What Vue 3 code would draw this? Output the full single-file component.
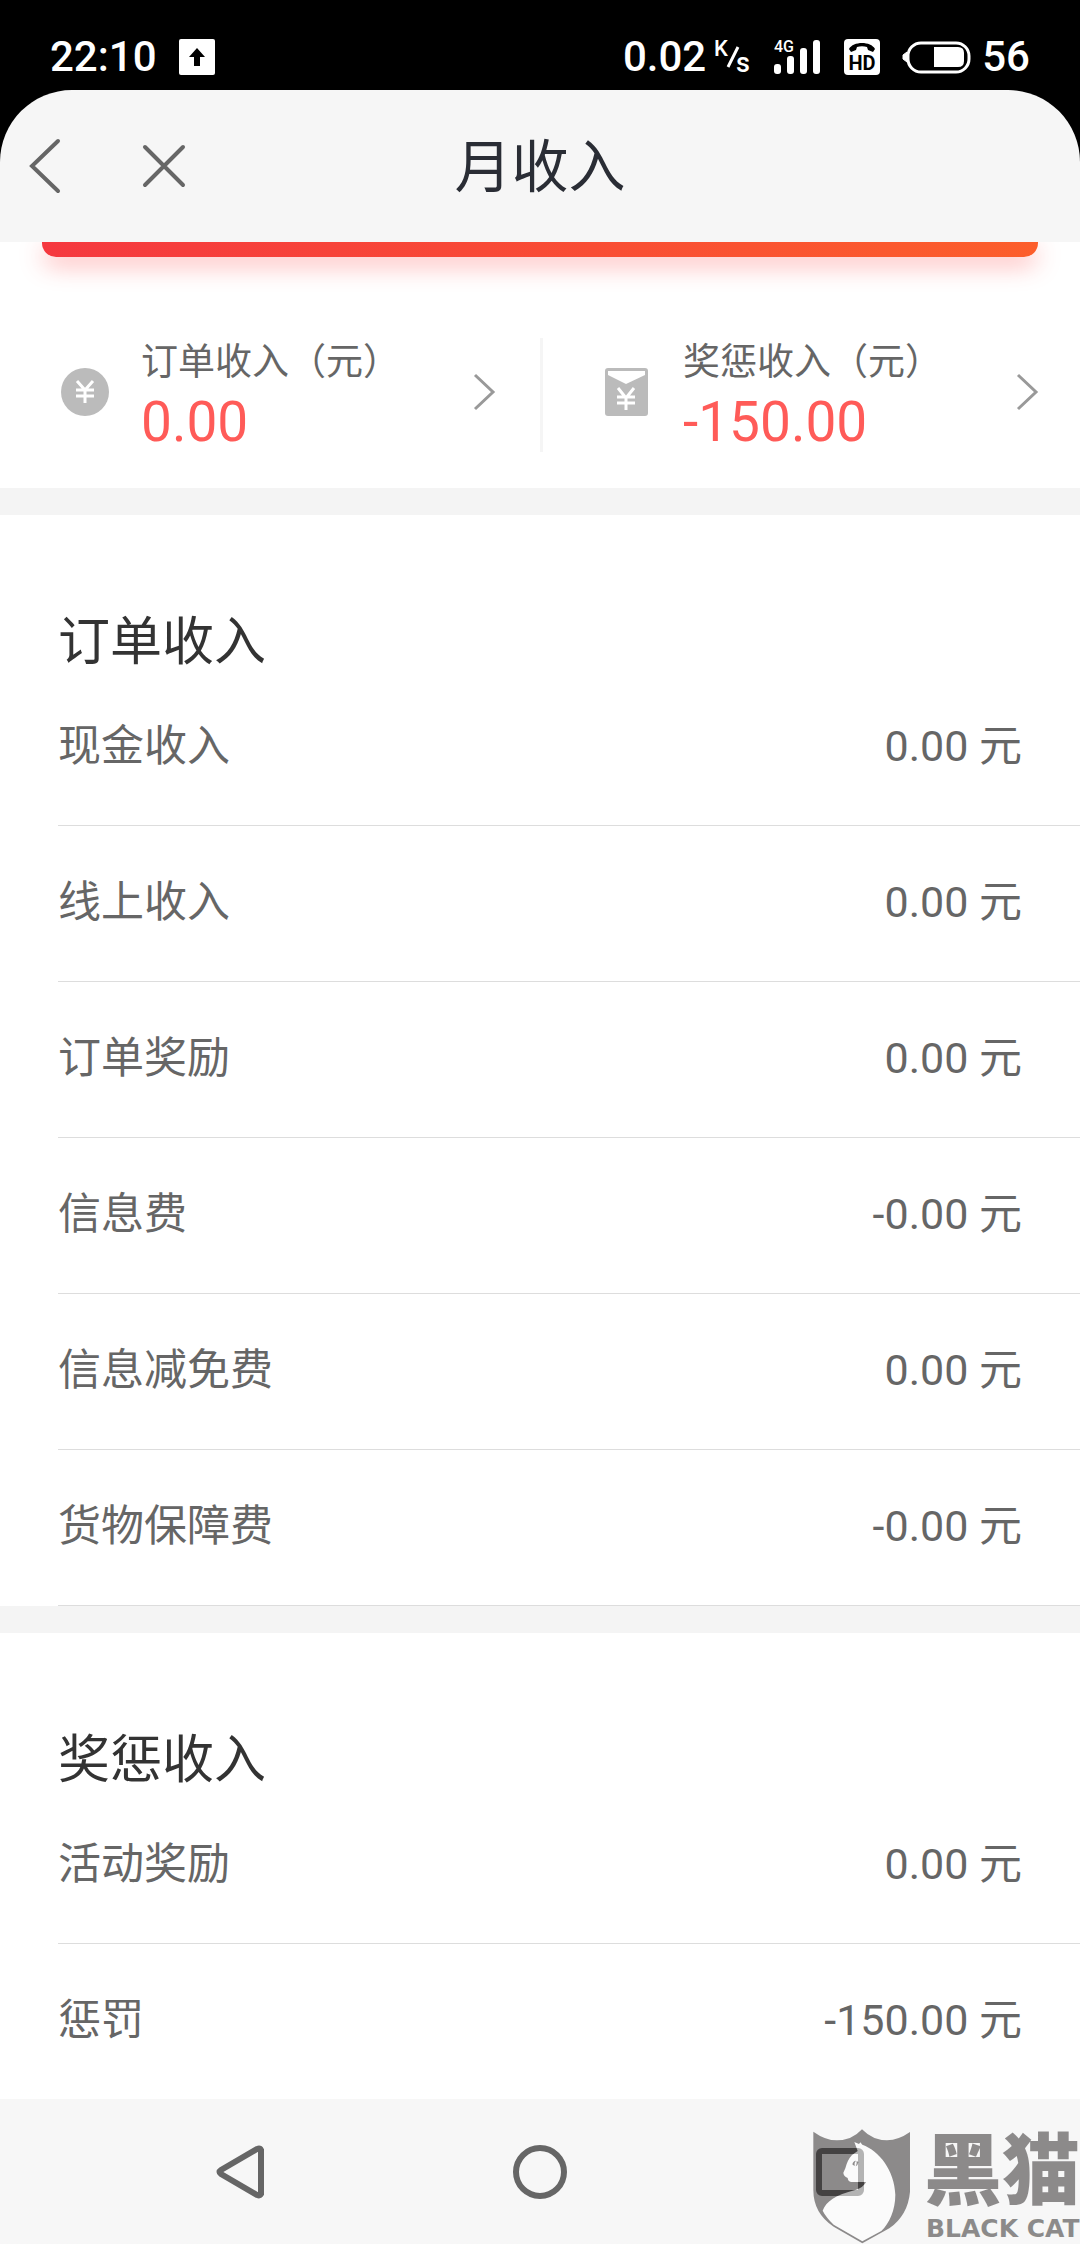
<template>
  <div class="page">
    <!-- Phone status bar -->
    <div class="status-bar">
      <div class="status-left">
        <span>22:10</span>
        <svg width="36" height="36" viewBox="0 0 36 36">
          <rect width="36" height="36" rx="2" fill="#fff" />
          <path d="M18 9 L26 18 H21 V27 H15 V18 H10 Z" fill="#000" />
        </svg>
      </div>
      <div class="status-right">
        <span>0.02</span>
        <svg class="speed-unit" width="36" height="36" viewBox="0 0 36 36">
          <text x="0" y="17" font-size="22">K</text>
          <path d="M14 28 L24 8" stroke="#fff" stroke-width="3" />
          <text x="22" y="33" font-size="27">s</text>
        </svg>
        <svg class="signal" width="46" height="36" viewBox="0 0 46 36">
          <text x="0" y="13" font-size="16">4G</text>
          <rect x="0" y="25" width="7" height="10" rx="3" />
          <rect x="13" y="17" width="7" height="18" rx="3" />
          <rect x="26" y="9" width="7" height="26" rx="3" />
          <rect x="39" y="1" width="7" height="34" rx="3" />
        </svg>
        <svg class="hd" width="36" height="36" viewBox="0 0 36 36">
          <rect width="36" height="36" rx="4" fill="#fff" />
          <path d="M5 10 C9 2 27 2 31 10 L29 13 L24 11 L23 8 C20 7 16 7 13 8 L12 11 L7 13 Z" />
          <text x="18" y="31" font-size="20" text-anchor="middle">HD</text>
        </svg>
        <svg class="battery" width="68" height="32" viewBox="0 0 68 32">
          <path d="M5 11 L1 14 V18 L5 21 Z" fill="#fff" stroke="#fff" />
          <rect x="6" y="2" width="61" height="29" rx="13" fill="none" stroke="#fff" stroke-width="3" />
          <path d="M32 6 H56 Q62 6 62 12 V20 Q62 26 56 26 H32 Z" fill="#fff" />
        </svg>
        <span>56</span>
      </div>
    </div>

    <!-- Title bar -->
    <div class="header-wrap">
      <header class="header">
        <div class="header-actions">
          <button class="icon-btn" aria-label="返回">
            <svg width="32" height="56" viewBox="0 0 32 56">
              <path d="M29 3 L3 28 L29 53" />
            </svg>
          </button>
          <button class="icon-btn" aria-label="关闭">
            <svg width="42" height="42" viewBox="0 0 42 42">
              <path d="M2 2 L40 40 M40 2 L2 40" />
            </svg>
          </button>
        </div>
        <h1>月收入</h1>
      </header>
    </div>

    <main>
      <section class="overview">
        <div class="card-edge"></div>
        <div class="summary">
          <a v-for="item in summary" :key="item.label" href="#" class="summary-item">
            <svg v-if="item.icon === 'coin'" class="summary-icon" viewBox="0 0 48 48">
              <circle cx="24" cy="24" r="24" fill="#bbb" />
              <path d="M16 13 L24 22 L32 13 M24 22 V35 M15 22 H33 M15 28 H33" />
            </svg>
            <svg v-else class="summary-icon" viewBox="0 0 48 48">
              <rect x="2" y="0" width="43" height="48" rx="3" fill="#bbb" />
              <path class="flap" d="M5 3 H42 V7 L23 16 L5 7 Z" />
              <path d="M15 20 L23 30 L31 20 M23 29 V42 M14 29 H32 M14 35 H32" />
            </svg>
            <div class="summary-text">
              <div class="summary-label">{{ item.label }}</div>
              <div class="summary-value">{{ item.value }}</div>
            </div>
            <svg class="arrow" width="22" height="38" viewBox="0 0 22 38">
              <path d="M2 2 L20 19 L2 36" />
            </svg>
          </a>
        </div>
      </section>

      <!-- Detail lists -->
      <section v-for="group in groups" :key="group.title" class="group">
        <h2>{{ group.title }}</h2>
        <dl>
          <div v-for="row in group.rows" :key="row.name" class="row">
            <dt>{{ row.name }}</dt>
            <dd>{{ row.amount }} 元</dd>
          </div>
        </dl>
      </section>
    </main>

    <!-- System navigation -->
    <nav class="nav-bar">
      <button class="icon-btn" aria-label="后退">
        <svg width="54" height="54" viewBox="0 0 54 54">
          <path d="M48 5 V49 Q47 51 44 50 L8 29 Q5 27 8 25 L44 4 Q47 3 48 5 Z" />
        </svg>
      </button>
      <button class="icon-btn" aria-label="主页">
        <svg width="54" height="54" viewBox="0 0 54 54">
          <circle cx="27" cy="27" r="24" />
        </svg>
      </button>
      <button class="icon-btn" aria-label="最近任务">
        <svg width="54" height="54" viewBox="0 0 54 54">
          <rect x="6" y="6" width="42" height="42" rx="3" />
        </svg>
      </button>

      <div class="watermark">
        <svg width="97" height="115" viewBox="33 87 291 345">
          <path
            fill="#231f20"
            fill-rule="evenodd"
            d="M34 95 Q70 121 105 121 Q150 121 180 88 Q212 121 255 121 Q290 120 324 96 V275 Q318 345 262 385 L181 430 L95 380 Q34 340 34 270 Z"
          />
          <path
            fill="#fff"
            d="M157 126 L171 132 L175 127 L181 134 C232 152 278 212 280 284 C280 330 262 370 238 393 L181 424 L95 374 Q72 352 62 332 C72 305 100 285 160 270 Q185 262 192 246 L147 246 Q138 244 137 234 Q124 228 124 218 L130 205 Q136 180 150 165 L167 153 Z"
          />
          <path fill="#231f20" d="M151 193 Q154 182 162 182 Q155 190 159 197 Q153 197 151 193 Z M164 183 L169 186 Q168 195 161 199 Q165 191 164 183 Z" />
        </svg>
        <div class="watermark-text">
          <span class="watermark-cn">黑猫</span>
          <span class="watermark-en">BLACK CAT</span>
        </div>
      </div>
    </nav>
  </div>
</template>

<script setup>
import { ref } from 'vue'

const summary = ref([
  { label: '订单收入（元）', value: '0.00', icon: 'coin' },
  { label: '奖惩收入（元）', value: '-150.00', icon: 'envelope' },
])

const groups = ref([
  {
    title: '订单收入',
    rows: [
      { name: '现金收入', amount: '0.00' },
      { name: '线上收入', amount: '0.00' },
      { name: '订单奖励', amount: '0.00' },
      { name: '信息费', amount: '-0.00' },
      { name: '信息减免费', amount: '0.00' },
      { name: '货物保障费', amount: '-0.00' },
    ],
  },
  {
    title: '奖惩收入',
    rows: [
      { name: '活动奖励', amount: '0.00' },
      { name: '惩罚', amount: '-150.00' },
    ],
  },
])
</script>

<style>
body {
  margin: 0;
  background: #fff;
}
</style>

<style scoped>
.page {
  min-height: 100vh;
  display: flex;
  flex-direction: column;
  font-family: Roboto, 'Noto Sans CJK SC', sans-serif;
  color: #666;
}

svg {
  display: block;
  flex: none;
  overflow: visible;
}

/* Status bar */
.status-bar {
  display: flex;
  justify-content: space-between;
  height: 90px;
  padding: 24px 50px 0 50px;
  box-sizing: border-box;
  background: #000;
  color: #fff;
  font-size: 42px;
  line-height: 66px;
  font-weight: 500;
}

.status-left,
.status-right {
  display: flex;
  align-items: center;
}

.status-left {
  gap: 22px;
}

.status-right text {
  font-weight: 500;
}

.speed-unit {
  margin-left: 8px;
  fill: #fff;
}

.signal {
  margin-left: 24px;
  fill: #fff;
}

.hd {
  margin-left: 24px;
}

.status-right .hd text {
  font-weight: 700;
}

.battery {
  margin: 0 12px 0 22px;
}

/* Title bar */
.header-wrap {
  background: #000;
}

.header {
  display: grid;
  grid-template-columns: 1fr auto 1fr;
  align-items: center;
  height: 152px;
  padding: 0 29px;
  border-radius: 72px 72px 0 0;
  box-sizing: border-box;
  background: #f6f6f6;
}

.header-actions {
  display: flex;
  align-items: center;
  gap: 82px;
}

.icon-btn {
  padding: 0;
  border: none;
  background: none;
  cursor: pointer;
}

.icon-btn svg {
  fill: none;
  stroke: #666;
  stroke-width: 4;
  stroke-linecap: round;
}

h1 {
  margin: 0;
  padding-top: 4px;
  font-size: 57px;
  line-height: 80px;
  font-weight: 400;
  color: #2a2d35;
}

/* Income overview */
main {
  flex: 1;
}

.overview {
  overflow: hidden;
  padding-bottom: 36px;
}

.card-edge {
  height: 15px;
  margin: 0 42px;
  border-radius: 0 0 14px 14px;
  background: linear-gradient(90deg, #f5383f, #fc5e2b);
  box-shadow: 0 8px 24px rgba(255, 60, 60, 0.4);
}

.summary {
  display: grid;
  grid-template-columns: 1fr 1fr;
  margin-top: 81px;
}

.summary-item {
  display: flex;
  align-items: center;
  height: 114px;
  padding: 0 45px 6px 61px;
  box-sizing: border-box;
  color: inherit;
  text-decoration: none;
}

.summary-item + .summary-item {
  padding-left: 60px;
  padding-right: 42px;
  border-left: 3px solid #f5f5f5;
}

.summary-icon {
  width: 48px;
  height: 48px;
  margin-right: 32px;
  fill: none;
  stroke: #fff;
  stroke-width: 3;
}

.summary-icon circle,
.summary-icon rect {
  stroke: none;
}

.summary-icon .flap {
  fill: #fff;
  stroke: none;
}

.summary-text {
  flex: 1;
}

.summary-label {
  font-size: 37px;
  line-height: 60px;
}

.summary-value {
  font-size: 55px;
  line-height: 58px;
  color: #ff5b58;
}

.arrow {
  fill: none;
  stroke: #999;
  stroke-width: 3;
}

/* Detail lists */
.group {
  border-top: 27px solid #f4f4f4;
  padding-left: 58px;
}

h2 {
  margin: 0;
  padding: 90px 0 0;
  height: 155px;
  box-sizing: border-box;
  font-size: 52px;
  line-height: 76px;
  font-weight: 400;
  color: #333;
}

dl {
  margin: 0;
}

.row {
  display: flex;
  justify-content: space-between;
  padding: 44px 58px 47px 0;
  border-bottom: 1px solid #ddd;
  font-size: 43px;
  line-height: 64px;
}

.group:last-child .row:last-child {
  border-bottom: none;
}

dd {
  margin: 0;
}

/* System navigation */
.nav-bar {
  position: relative;
  display: grid;
  grid-template-columns: repeat(3, 1fr);
  place-items: center;
  height: 145px;
  padding: 0 90px;
  background: #f7f7f7;
}

.nav-bar .icon-btn svg {
  stroke-width: 6;
}

.watermark {
  position: absolute;
  right: 0;
  bottom: 0;
  display: flex;
  align-items: flex-end;
  gap: 14px;
  opacity: 0.5;
  color: #231f20;
}

.watermark-text {
  display: flex;
  flex-direction: column;
}

.watermark-cn {
  font-size: 78px;
  line-height: 82px;
  font-weight: 900;
}

.watermark-en {
  padding-left: 2px;
  font-family: 'DejaVu Sans', sans-serif;
  font-size: 25px;
  line-height: 30px;
  font-weight: 700;
}
</style>
